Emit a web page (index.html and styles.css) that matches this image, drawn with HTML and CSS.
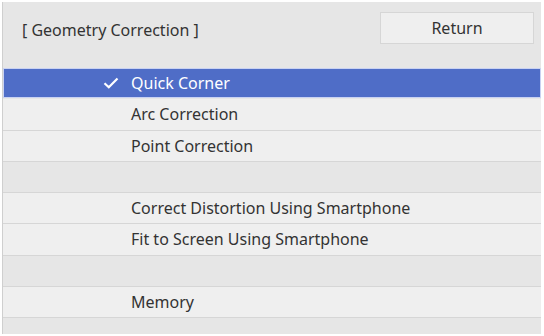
FILE: index.html
```html
<!DOCTYPE html>
<html>
<head>
<meta charset="utf-8">
<link rel="stylesheet" href="styles.css">
</head>
<body>
<div class="panel">
  <div class="header">
    <div class="title">[ Geometry Correction ]</div>
    <div class="return">Return</div>
  </div>
  <div class="list">
    <div class="row selected"><span class="check"><svg width="16" height="12" viewBox="0 0 16 12"><path d="M1.5 6.2 L5.8 10.2 L14.5 1.5" fill="none" stroke="#fff" stroke-width="2.2"/></svg></span><span class="label">Quick Corner</span></div>
    <div class="row"><span class="label">Arc Correction</span></div>
    <div class="row"><span class="label">Point Correction</span></div>
    <div class="row blank"></div>
    <div class="row"><span class="label">Correct Distortion Using Smartphone</span></div>
    <div class="row"><span class="label">Fit to Screen Using Smartphone</span></div>
    <div class="row blank"></div>
    <div class="row"><span class="label">Memory</span></div>
    <div class="row blank last"></div>
  </div>
</div>
</body>
</html>
```

FILE: styles.css
```css
html, body {
  margin: 0;
  padding: 0;
  background: #ffffff;
}
body {
  width: 544px;
  height: 336px;
  overflow: hidden;
  font-family: "Noto Sans", "Open Sans", sans-serif;
  color: #333333;
}
.panel {
  margin: 2px 3px 0 2px;
  height: 332px;
  overflow: hidden;
  background: #e6e6e6;
  border-left: 1px solid #cfcfcf;
  display: flex;
  flex-direction: column;
}
.header {
  height: 66px;
  flex-shrink: 0;
  display: flex;
  justify-content: space-between;
  align-items: flex-start;
}
.title {
  font-size: 16px;
  margin: 17px 0 0 19px;
  line-height: 22px;
}
.return {
  margin: 10px 7px 0 0;
  width: 152px;
  height: 30px;
  background: #efefef;
  border: 1px solid #d6d6d6;
  font-size: 16px;
  line-height: 30px;
  text-align: center;
}
.list {
  display: flex;
  flex-direction: column;
  flex-shrink: 0;
}
.row {
  flex-shrink: 0;
  height: 30.25px;
  border-bottom: 1px solid #d6d6d6;
  background: #efefef;
  display: flex;
  align-items: center;
  font-size: 16px;
  box-sizing: content-box;
}
.row .label {
  margin-left: 128px;
}
.row.blank {
  background: #e6e6e6;
}
.row.last {
  border-bottom: none;
}
.row.selected {
  background: #4f6dc7;
  color: #ffffff;
  border: 1px solid #c9d2f2;
  height: 28.25px;
  margin-bottom: 1px;
}
.row.selected .label {
  margin-left: 12px;
}
.check {
  margin-left: 99px;
  width: 16px;
  height: 12px;
  display: flex;
}
```
